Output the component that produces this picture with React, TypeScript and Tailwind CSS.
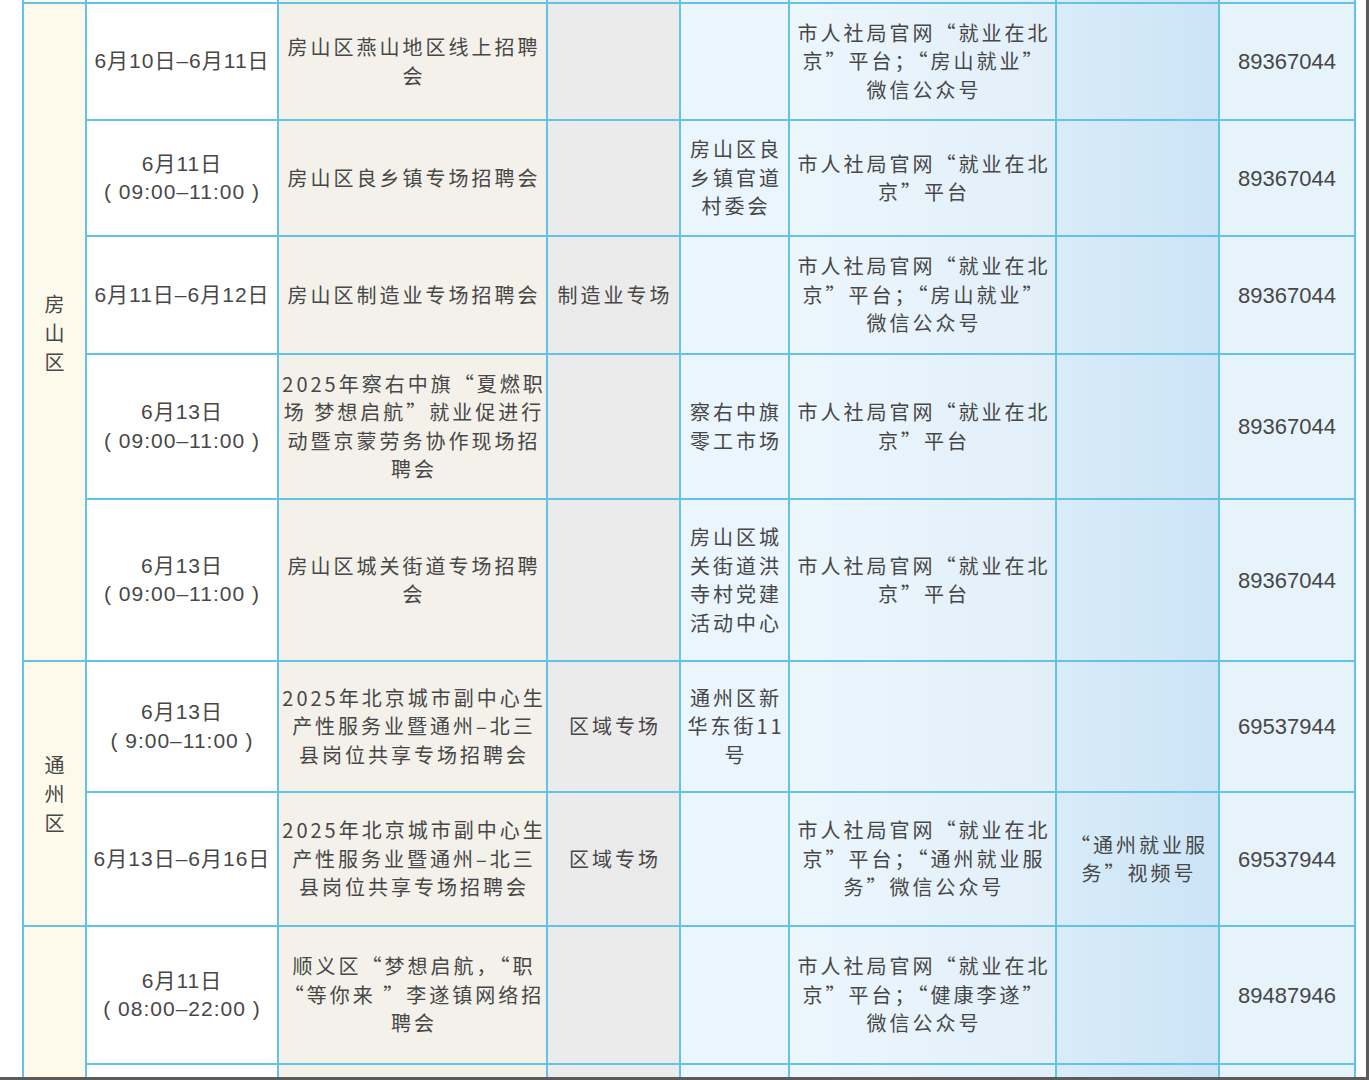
import React from 'react';

type RowData = {
  date: string[];
  name: string[];
  type: string[];
  place: string[];
  online: string[];
  video: string[];
  phone: string;
};

const ONLINE_FS = ['市人社局官网“就业在北', '京”平台；“房山就业”', '微信公众号'];
const ONLINE_BJ = ['市人社局官网“就业在北', '京”平台'];
const TIME_AM = '( 09:00–11:00 )';

const rows: RowData[] = [
  { date: ['6月10日–6月11日'], name: ['房山区燕山地区线上招聘', '会'], type: [], place: [], online: ONLINE_FS, video: [], phone: '89367044' },
  { date: ['6月11日', TIME_AM], name: ['房山区良乡镇专场招聘会'], type: [], place: ['房山区良', '乡镇官道', '村委会'], online: ONLINE_BJ, video: [], phone: '89367044' },
  { date: ['6月11日–6月12日'], name: ['房山区制造业专场招聘会'], type: ['制造业专场'], place: [], online: ONLINE_FS, video: [], phone: '89367044' },
  {
    date: ['6月13日', TIME_AM],
    name: ['2025年察右中旗“夏燃职', '场 梦想启航”就业促进行', '动暨京蒙劳务协作现场招', '聘会'],
    type: [],
    place: ['察右中旗', '零工市场'],
    online: ONLINE_BJ,
    video: [],
    phone: '89367044',
  },
  { date: ['6月13日', TIME_AM], name: ['房山区城关街道专场招聘', '会'], type: [], place: ['房山区城', '关街道洪', '寺村党建', '活动中心'], online: ONLINE_BJ, video: [], phone: '89367044' },
  {
    date: ['6月13日', '( 9:00–11:00 )'],
    name: ['2025年北京城市副中心生', '产性服务业暨通州–北三', '县岗位共享专场招聘会'],
    type: ['区域专场'],
    place: ['通州区新', '华东街11', '号'],
    online: [],
    video: [],
    phone: '69537944',
  },
  {
    date: ['6月13日–6月16日'],
    name: ['2025年北京城市副中心生', '产性服务业暨通州–北三', '县岗位共享专场招聘会'],
    type: ['区域专场'],
    place: [],
    online: ['市人社局官网“就业在北', '京”平台；“通州就业服', '务”微信公众号'],
    video: ['“通州就业服', '务”视频号'],
    phone: '69537944',
  },
  {
    date: ['6月11日', '( 08:00–22:00 )'],
    name: ['顺义区“梦想启航，“职', '“等你来 ”李遂镇网络招', '聘会'],
    type: [],
    place: [],
    online: ['市人社局官网“就业在北', '京”平台；“健康李遂”', '微信公众号'],
    video: [],
    phone: '89487946',
  },
];

const cjk = "font-['Noto_Sans_CJK_SC',sans-serif] text-[20px] leading-[28.5px] tracking-[3px] pl-[3px]";
const latin = "font-['Liberation_Sans','Noto_Sans_CJK_SC',sans-serif] text-[21px] leading-[28.5px] tracking-[1px]";

const Lines = ({ lines }: { lines: string[] }) => (
  <>
    {lines.map((l, i) => (
      <div key={i} className="whitespace-nowrap">
        {l}
      </div>
    ))}
  </>
);

const Cell = ({ bg, font, lines }: { bg: string; font: string; lines: string[] }) => (
  <div className={`flex flex-col items-center justify-center text-center text-[#474747] ${bg} ${font}`}>
    <Lines lines={lines} />
  </div>
);

const BG = {
  district: 'bg-[#fdfaeb]',
  date: 'bg-white',
  name: 'bg-[#f3f1ea]',
  type: 'bg-[#ebebeb]',
  place: 'bg-[#eaf5fd]',
  online: 'bg-gradient-to-r from-[#ecf6fd] to-[#e2eff9]',
  video: 'bg-gradient-to-r from-[#d8ecf9] to-[#cbe4f6]',
  phone: 'bg-[#e7f3fb]',
};

const EmptyRow = () => (
  <>
    <div className={BG.date} />
    <div className={BG.name} />
    <div className={BG.type} />
    <div className={BG.place} />
    <div className={BG.online} />
    <div className={BG.video} />
    <div className={BG.phone} />
  </>
);

const DataRow = ({ r }: { r: RowData }) => (
  <>
    <Cell bg={BG.date} font={latin} lines={r.date} />
    <Cell bg={BG.name} font={cjk} lines={r.name} />
    <Cell bg={BG.type} font={cjk} lines={r.type} />
    <Cell bg={BG.place} font={cjk} lines={r.place} />
    <Cell bg={BG.online} font={cjk} lines={r.online} />
    <Cell bg={BG.video} font={cjk} lines={r.video} />
    <div className={`flex items-center justify-center text-[#474747] font-['Liberation_Sans',sans-serif] text-[22px] ${BG.phone}`}>
      {r.phone}
    </div>
  </>
);

const District = ({ name, span }: { name: string; span: string }) => (
  <div
    className={`${span} flex flex-col items-center justify-center text-[#474747] font-['Noto_Sans_CJK_SC',sans-serif] text-[20px] leading-[29px] ${BG.district}`}
  >
    {name.split('').map((c, i) => (
      <div key={i}>{c}</div>
    ))}
  </div>
);

export default function App() {
  return (
    <div className="w-[1369px] h-[1080px] bg-white overflow-hidden border-r-[3px] border-b-[3px] border-[#5b5b5b]">
      <div className="ml-[22px] w-[1334px] px-[2px] bg-[#62c3e6] grid gap-[2px] grid-cols-[61px_190px_267px_131px_107px_265px_161px_134px] grid-rows-[2px_115px_114px_116px_143px_160px_129px_132px_136px_40px]">
        <div className={BG.district} />
        <EmptyRow />

        <District name="房山区" span="row-span-5" />
        {rows.slice(0, 5).map((r, i) => (
          <DataRow key={i} r={r} />
        ))}

        <District name="通州区" span="row-span-2" />
        {rows.slice(5, 7).map((r, i) => (
          <DataRow key={i} r={r} />
        ))}

        <District name="" span="row-span-2" />
        <DataRow r={rows[7]} />
        <EmptyRow />
      </div>
    </div>
  );
}
